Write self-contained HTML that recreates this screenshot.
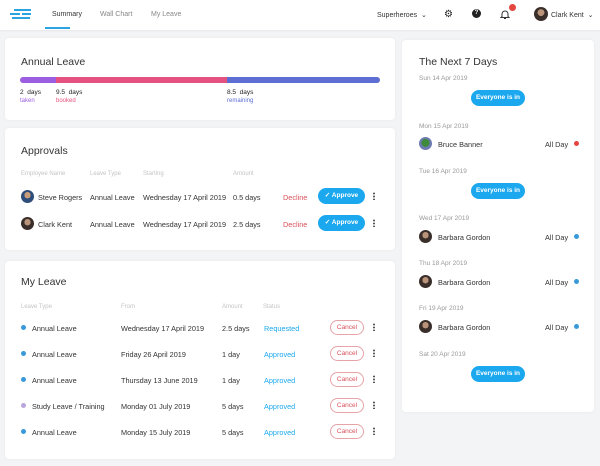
<!DOCTYPE html>
<html><head><meta charset="utf-8"><style>
*{box-sizing:border-box;margin:0;padding:0}
body{width:600px;height:466px;background:#f3f4f6;font-family:"Liberation Sans",sans-serif;color:#333;position:relative;overflow:hidden;font-size:7.3px}
.a{position:absolute;white-space:nowrap}
.nav{position:absolute;left:0;top:0;width:600px;height:30px;background:#fff;box-shadow:0 1px 2px rgba(0,0,0,.06)}
.card{position:absolute;background:#fff;border-radius:4px;box-shadow:0 0 3px rgba(0,0,0,.05)}
h2{position:absolute;font-size:10.5px;font-weight:normal;color:#333;white-space:nowrap}
.hd{color:#c4c4c4;font-size:6px}
.av{position:absolute;width:13px;height:13px;border-radius:50%;background:radial-gradient(circle at 50% 40%,#b9937a 0 30%,#3a2e2a 32%)}
.btn{position:absolute;background:#1ba8ee;color:#fff;border-radius:8px;font-size:6.5px;font-weight:bold;text-align:center}
.can{position:absolute;width:34px;height:15px;border:1px solid #e6a3a8;border-radius:8px;color:#d9505a;font-size:6.5px;text-align:center;line-height:13px}
.dots{position:absolute;width:2px;height:8px;background:radial-gradient(circle,#555 0.9px,transparent 1.1px) 0 0/2px 3px}
.dot{position:absolute;width:5px;height:5px;border-radius:50%}
.date{color:#999;font-size:6.5px}
</style></head><body>
<div class="nav">
 <div class="a" style="left:14px;top:9px;width:17px;height:2px;background:#2aa4e0"></div>
 <div class="a" style="left:10px;top:13px;width:10px;height:2px;background:#2aa4e0"></div>
 <div class="a" style="left:22px;top:13px;width:9px;height:2px;background:#2aa4e0"></div>
 <div class="a" style="left:12px;top:17px;width:18px;height:2px;background:#2aa4e0"></div>
 <div class="a" style="left:52px;top:11px;font-size:7px;color:#333">Summary</div>
 <div class="a" style="left:45px;top:27px;width:25px;height:2px;background:#2aa4e0"></div>
 <div class="a" style="left:100px;top:11px;font-size:7px;color:#888">Wall Chart</div>
 <div class="a" style="left:151px;top:11px;font-size:7px;color:#888">My Leave</div>
 <div class="a" style="left:377px;top:11px;font-size:7px;color:#333">Superheroes &nbsp;⌄</div>
 <div class="a" style="left:444px;top:9px;font-size:10px;color:#222">⚙</div>
 <div class="a" style="left:472px;top:9px;width:9px;height:9px;border-radius:50%;background:#222;color:#fff;font-size:6px;text-align:center;line-height:9px;font-weight:bold">?</div>
 <svg class="a" style="left:500px;top:9px" width="10" height="11" viewBox="0 0 10 11"><path d="M2 7.5V5a3 3 0 0 1 6 0v2.5l1 1H1z" fill="none" stroke="#333" stroke-width="1"/><path d="M4 9.5h2" stroke="#333" stroke-width="1"/></svg>
 <div class="dot" style="left:509px;top:4px;width:7px;height:7px;background:#e4453f"></div>
 <div class="av" style="left:534px;top:7px;width:14px;height:14px"></div>
 <div class="a" style="left:551px;top:11px;font-size:7px;color:#333">Clark Kent &nbsp;⌄</div>
</div>

<div class="card" style="left:5px;top:38px;width:390px;height:82px">
 <h2 style="left:16px;top:18px">Annual Leave</h2>
 <div class="a" style="left:15px;top:39px;width:360px;height:6px;border-radius:3px;background:linear-gradient(90deg,#9b5ee0 0 36px,#e5527f 36px 207px,#5d6ed3 207px)"></div>
 <div class="a" style="left:15px;top:51px;font-size:6.5px;color:#222">2 &nbsp;days</div>
 <div class="a" style="left:15px;top:60px;font-size:6px;color:#9b5ee0">taken</div>
 <div class="a" style="left:51px;top:51px;font-size:6.5px;color:#222">9.5 &nbsp;days</div>
 <div class="a" style="left:51px;top:60px;font-size:6px;color:#e5527f">booked</div>
 <div class="a" style="left:222px;top:51px;font-size:6.5px;color:#222">8.5 &nbsp;days</div>
 <div class="a" style="left:222px;top:60px;font-size:6px;color:#5d6ed3">remaining</div>
</div>

<div class="card" style="left:5px;top:128px;width:390px;height:122px">
 <h2 style="left:16px;top:17px">Approvals</h2>
 <div class="a hd" style="left:16px;top:43px">Employee Name</div>
 <div class="a hd" style="left:85px;top:43px">Leave Type</div>
 <div class="a hd" style="left:138px;top:43px">Starting</div>
 <div class="a hd" style="left:228px;top:43px">Amount</div>
 <div class="av" style="left:16px;top:62px;background:radial-gradient(circle at 50% 40%,#c99d7a 0 30%,#2f4d7a 32%)"></div>
 <div class="a" style="left:33px;top:65px">Steve Rogers</div><div class="a" style="left:85px;top:65px">Annual Leave</div><div class="a" style="left:138px;top:65px">Wednesday 17 April 2019</div><div class="a" style="left:228px;top:65px">0.5 days</div>
 <div class="a" style="left:278px;top:65px;color:#d9505a">Decline</div>
 <div class="btn" style="left:313px;top:60px;width:47px;height:16px;line-height:16px">✓ Approve</div>
 <div class="dots" style="left:368px;top:64px"></div>
 <div class="av" style="left:16px;top:89px"></div>
 <div class="a" style="left:33px;top:92px">Clark Kent</div><div class="a" style="left:85px;top:92px">Annual Leave</div><div class="a" style="left:138px;top:92px">Wednesday 17 April 2019</div><div class="a" style="left:228px;top:92px">2.5 days</div>
 <div class="a" style="left:278px;top:92px;color:#d9505a">Decline</div>
 <div class="btn" style="left:313px;top:87px;width:47px;height:16px;line-height:16px">✓ Approve</div>
 <div class="dots" style="left:368px;top:91px"></div>
</div>

<div class="card" style="left:5px;top:261px;width:390px;height:198px">
 <h2 style="left:16px;top:15px">My Leave</h2>
 <div class="a hd" style="left:16px;top:43px">Leave Type</div>
 <div class="a hd" style="left:116px;top:43px">From</div>
 <div class="a hd" style="left:217px;top:43px">Amount</div>
 <div class="a hd" style="left:258px;top:43px">Status</div>
 <div class="dot" style="left:16px;top:64px;background:#3a9ad9"></div><div class="a" style="left:27px;top:63px">Annual Leave</div><div class="a" style="left:116px;top:63px">Wednesday 17 April 2019</div><div class="a" style="left:217px;top:63px">2.5 days</div><div class="a" style="left:259px;top:63px;color:#1ba8ee">Requested</div><div class="can" style="left:325px;top:59px">Cancel</div><div class="dots" style="left:368px;top:62px"></div>
 <div class="dot" style="left:16px;top:90px;background:#3a9ad9"></div><div class="a" style="left:27px;top:89px">Annual Leave</div><div class="a" style="left:116px;top:89px">Friday 26 April 2019</div><div class="a" style="left:217px;top:89px">1 day</div><div class="a" style="left:259px;top:89px;color:#1ba8ee">Approved</div><div class="can" style="left:325px;top:85px">Cancel</div><div class="dots" style="left:368px;top:88px"></div>
 <div class="dot" style="left:16px;top:116px;background:#3a9ad9"></div><div class="a" style="left:27px;top:115px">Annual Leave</div><div class="a" style="left:116px;top:115px">Thursday 13 June 2019</div><div class="a" style="left:217px;top:115px">1 day</div><div class="a" style="left:259px;top:115px;color:#1ba8ee">Approved</div><div class="can" style="left:325px;top:111px">Cancel</div><div class="dots" style="left:368px;top:114px"></div>
 <div class="dot" style="left:16px;top:142px;background:#b9a6dc"></div><div class="a" style="left:27px;top:141px">Study Leave / Training</div><div class="a" style="left:116px;top:141px">Monday 01 July 2019</div><div class="a" style="left:217px;top:141px">5 days</div><div class="a" style="left:259px;top:141px;color:#1ba8ee">Approved</div><div class="can" style="left:325px;top:137px">Cancel</div><div class="dots" style="left:368px;top:140px"></div>
 <div class="dot" style="left:16px;top:168px;background:#3a9ad9"></div><div class="a" style="left:27px;top:167px">Annual Leave</div><div class="a" style="left:116px;top:167px">Monday 15 July 2019</div><div class="a" style="left:217px;top:167px">5 days</div><div class="a" style="left:259px;top:167px;color:#1ba8ee">Approved</div><div class="can" style="left:325px;top:163px">Cancel</div><div class="dots" style="left:368px;top:166px"></div>
</div>

<div class="card" style="left:402px;top:40px;width:192px;height:372px">
 <h2 style="left:17px;top:16px">The Next 7 Days</h2>
 <div class="a date" style="left:17px;top:35px">Sun 14 Apr 2019</div>
 <div class="btn" style="left:69px;top:50px;width:54px;height:16px;line-height:16px">Everyone is in</div>
 <div class="a date" style="left:17px;top:83px">Mon 15 Apr 2019</div>
 <div class="av" style="left:17px;top:97px;background:radial-gradient(circle at 50% 45%,#3d8a3a 0 40%,#6c7bb0 42%)"></div>
 <div class="a" style="left:36px;top:100px">Bruce Banner</div><div class="a" style="left:143px;top:100px">All Day</div><div class="dot" style="left:172px;top:101px;background:#e4453f"></div>
 <div class="a date" style="left:17px;top:128px">Tue 16 Apr 2019</div>
 <div class="btn" style="left:69px;top:143px;width:54px;height:16px;line-height:16px">Everyone is in</div>
 <div class="a date" style="left:17px;top:175px">Wed 17 Apr 2019</div>
 <div class="av" style="left:17px;top:190px"></div><div class="a" style="left:36px;top:193px">Barbara Gordon</div><div class="a" style="left:143px;top:193px">All Day</div><div class="dot" style="left:172px;top:194px;background:#3a9ad9"></div>
 <div class="a date" style="left:17px;top:220px">Thu 18 Apr 2019</div>
 <div class="av" style="left:17px;top:235px"></div><div class="a" style="left:36px;top:238px">Barbara Gordon</div><div class="a" style="left:143px;top:238px">All Day</div><div class="dot" style="left:172px;top:239px;background:#3a9ad9"></div>
 <div class="a date" style="left:17px;top:265px">Fri 19 Apr 2019</div>
 <div class="av" style="left:17px;top:280px"></div><div class="a" style="left:36px;top:283px">Barbara Gordon</div><div class="a" style="left:143px;top:283px">All Day</div><div class="dot" style="left:172px;top:284px;background:#3a9ad9"></div>
 <div class="a date" style="left:17px;top:311px">Sat 20 Apr 2019</div>
 <div class="btn" style="left:69px;top:326px;width:54px;height:16px;line-height:16px">Everyone is in</div>
</div>
</body></html>
